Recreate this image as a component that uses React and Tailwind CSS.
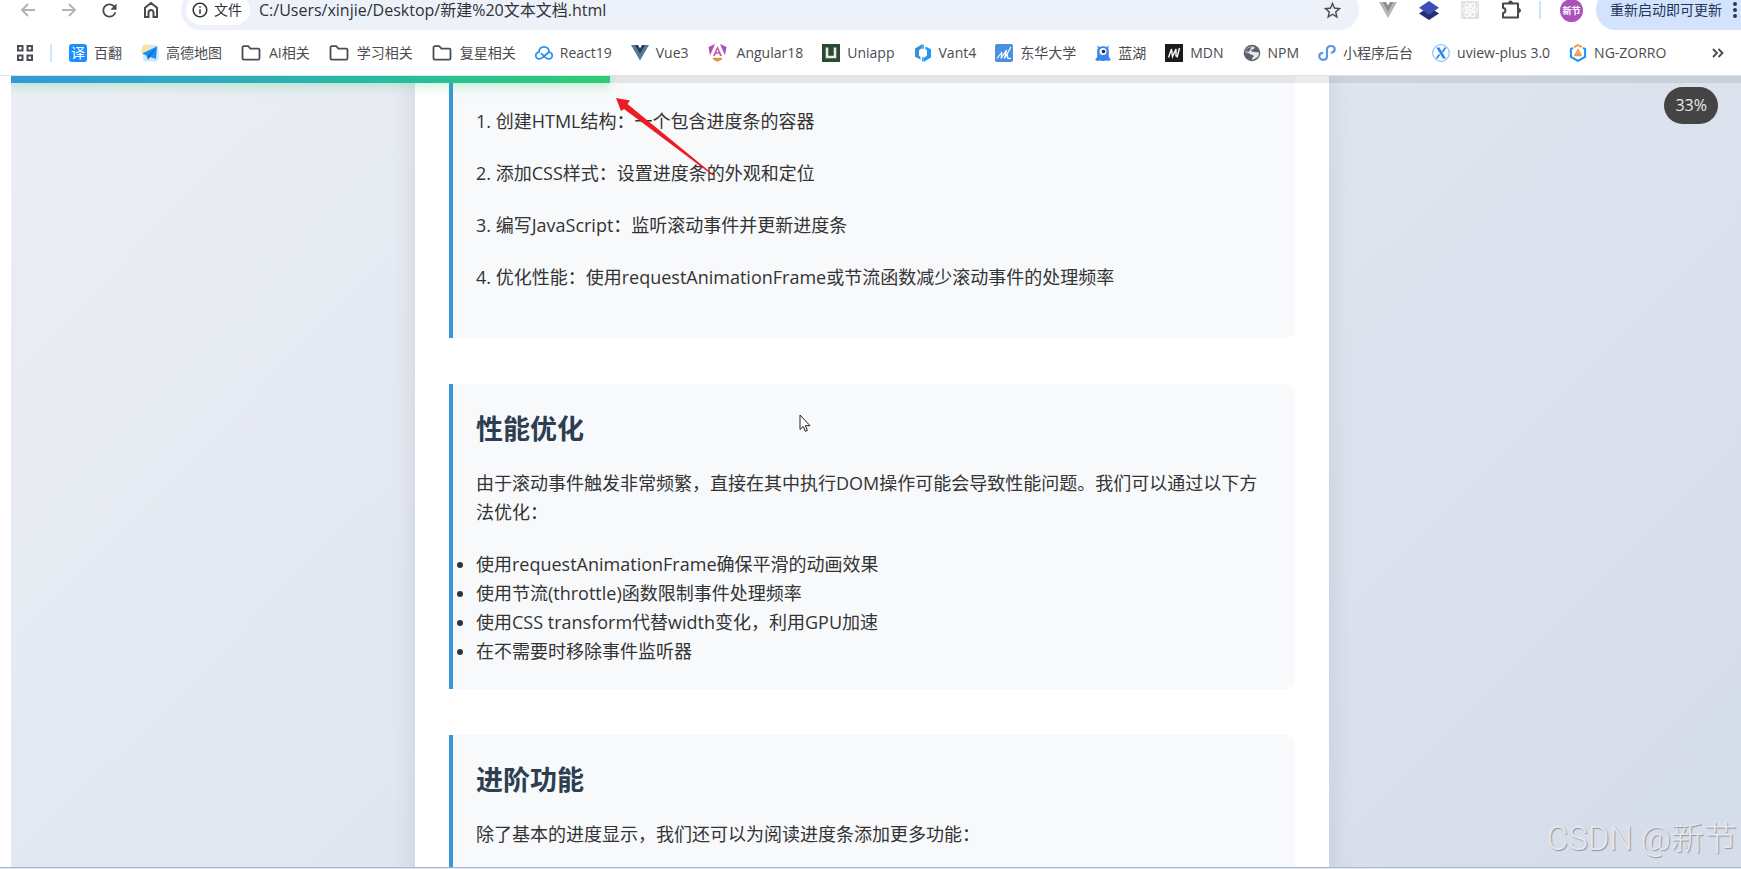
import React from 'react';
import { MdRefresh, MdInfoOutline, MdStarBorder } from 'react-icons/md';

const PROGRESS = 34.6;

const FolderIcon = () => (
    <svg viewBox="0 0 20 18" className="w-5 h-[18px] mr-[2px]" fill="none" stroke="#4a4d52" strokeWidth="1.8" strokeLinejoin="round">
        <path d="M1.5 3.5a1.3 1.3 0 0 1 1.3-1.3h4.4L9.4 4.6h7.8a1.3 1.3 0 0 1 1.3 1.3v8.4a1.3 1.3 0 0 1-1.3 1.3H2.8a1.3 1.3 0 0 1-1.3-1.3z" />
    </svg>
);

const TranslateIcon = () => (
    <span className="w-[18px] h-[18px] rounded-[3px] bg-[#1890ff] text-white text-[14px] leading-[18px] text-center">译</span>
);

const AmapIcon = () => (
    <svg viewBox="0 0 18 18" className="w-[18px] h-[18px]">
        <rect x="2" y="1" width="15.5" height="16.5" rx="4" fill="#cfe7fb" />
        <path d="M5 .5h5L6 8 .5 9V5A4.500 4.500 0 0 1 5 .5z" fill="#fbe3a4" />
        <path d="M16 2.500 1 9.500l4.500 2 1.500 4 2-2.500 6 2z" fill="#1a8cf5" />
        <path d="m16 2.500-9.500 9.500.5 3.500 2-2.500z" fill="#0e6fd6" />
    </svg>
);

const ReactCloudIcon = () => (
    <svg viewBox="0 0 18 18" className="w-[18px] h-[18px]" fill="none" stroke="#2490f0" strokeWidth="1.7" strokeLinecap="round" strokeLinejoin="round">
        <path d="M4 8C4 4.800 6.200 2.800 9 2.800S14 4.800 14 8c2 .3 3.200 1.600 3.200 3.400 0 2-1.500 3.500-3.600 3.500-1.400 0-2.200-.5-3.100-1.400L6.500 9.600" />
        <path d="M4 8C2 8.300.8 9.600.8 11.400c0 2 1.500 3.500 3.600 3.500 1.400 0 2.200-.5 3.100-1.400L14 8" />
    </svg>
);

const VueIcon = () => (
    <svg viewBox="0 0 18 18" className="w-[18px] h-[18px]">
        <path d="M0 1h3.600L9 10.300 14.400 1H18L9 16.600z" fill="#4a7ba0" />
        <path d="M3.600 1H7l2 3.500L11 1h3.400L9 10.300z" fill="#2b3a52" />
    </svg>
);

const AngularIcon = () => (
    <svg viewBox="0 0 19 19" className="w-[19px] h-[19px] mr-[3px]">
        <path d="M.5 4 7 1 2 12.500zM18.500 4 12 1l5 11.500z" fill="#b54bc0" />
        <path d="M9.500 3 5 13h2l.9-2.200h3.200L12 13h2zm0 3.600 1.100 2.700H8.400z" fill="#c65a9c" />
        <path d="M4.600 14.800h9.800l-.7 1.900-4.200 2-4.200-2z" fill="#e2944c" />
    </svg>
);

const UniappIcon = () => (
    <svg viewBox="0 0 18 18" className="w-[18px] h-[18px]">
        <rect width="18" height="18" fill="#2b4b30" />
        <path d="M5 3.500V13h8V3.500" fill="none" stroke="#e8efe8" strokeWidth="2.6" />
    </svg>
);

const VantIcon = () => (
    <svg viewBox="0 0 18 18" className="w-[18px] h-[18px]">
        <path d="M8.500 0v4L5 6.200v5.600l1.500 1v2.800L1 12.700V4.600z" fill="#3f8fd0" />
        <path d="M9.500 18v-4l3.500-2.200V6.200l-1.500-1V2.400L17 5.300v8.100z" fill="#1b9af5" />
        <path d="M8.500 0 10 1v3.500L8.500 5.500zM9.500 18 8 17v-3.500l1.500-1z" fill="#37a9f2" />
    </svg>
);

const DonghuaIcon = () => (
    <svg viewBox="0 0 18 18" className="w-[18px] h-[18px]">
        <rect width="18" height="18" rx="2" fill="#4a8fe2" />
        <path d="m2 14.500 5-6.500-1 6.500L11.500 6 9.500 14.500 16 3M12 10l1 4.500h3" fill="none" stroke="#fff" strokeWidth="1.2" />
    </svg>
);

const LanhuIcon = () => (
    <svg viewBox="0 0 16 18" className="w-4 h-[18px]">
        <path d="M3 1.500 4 3.200C5 2.600 6.400 2.300 8 2.300s3 .3 4 .9l1-1.700.8.4-.7 2.400c.5.8.7 1.700.7 2.700v5.500c.4 1.400 1.300 2.300 1.900 2.700-.2 1-1 1.600-2.200 1.600-1 0-1.600-.4-2.300-.4-.8 0-1.500.6-3.200.6s-2.400-.6-3.200-.6c-.7 0-1.300.4-2.300.4-1.200 0-2-.6-2.200-1.600.6-.4 1.500-1.300 1.900-2.700V7c0-1 .2-1.900.7-2.700l-.7-2.400z" fill="#3c86f0" />
        <circle cx="8" cy="7.500" r="3.500" fill="#fff" />
        <circle cx="8.500" cy="7.500" r="1.800" fill="#1f2b47" />
    </svg>
);

const MdnIcon = () => (
    <svg viewBox="0 0 18 18" className="w-[18px] h-[18px]">
        <rect width="18" height="18" fill="#1b1b1b" />
        <path d="M3.500 13.500 6.500 5l1 7.500L11 5v7.500M14.500 4 12 13.500" fill="none" stroke="#fff" strokeWidth="1.4" />
    </svg>
);

const NpmIcon = () => (
    <svg viewBox="0 0 18 18" className="w-[18px] h-[18px]">
        <circle cx="9" cy="9" r="8.300" fill="#5d6170" />
        <path d="M9.500 2.500c2 .3 2.500 1.300 1.500 2.200C10 5.500 8 5.300 8 6.500s2 1.200 3.500 1.500 2.500 0 4.500.5c0 2-.5 3.500-1.500 4.500-1 .8-2.500 1.500-4 2.500-1 .5-2 0-1.500-1 .5-1.200 2-1.500 1.800-2.500-.3-1-1.800-1-2.800-1.500S6 8.800 2.500 8.500c0-2 1-3.800 2.500-5 1.500-.9 3-1.200 4.500-1z" fill="#fff" opacity=".85" />
        <path d="M3.500 5.500C5 3.200 7 2.800 9 3.500 7 4.500 7.500 5.500 6.500 7 5.500 8.200 4 7.800 3 7.500z" fill="#5d6170" />
    </svg>
);

const MiniProgramIcon = () => (
    <svg viewBox="0 0 18 18" className="w-[18px] h-[18px]" fill="none" stroke="#5b95e8" strokeWidth="2.2" strokeLinecap="round">
        <path d="M4.300 8.900c-1.800.3-3 1.700-3 3.400 0 2 1.600 3.500 3.700 3.500 2.300 0 4-1.500 4-3.800V5.600c0-2.100 1.700-3.600 4-3.600 2.100 0 3.700 1.400 3.700 3.300 0 1.700-1.200 3-3 3.300" />
    </svg>
);

const UviewIcon = () => (
    <svg viewBox="0 0 18 18" className="w-[18px] h-[18px]" fill="none">
        <circle cx="9" cy="9" r="8.300" stroke="#8ac4f8" strokeWidth="1.2" />
        <path d="M4.300 3.500h3.200l6.500 11h-3.200z" fill="#2f86f0" />
        <path d="M13.500 3.500 10.500 8M7.500 10.500l-3 4" stroke="#2f86f0" strokeWidth="1.8" />
    </svg>
);

const ZorroIcon = () => (
    <svg viewBox="0 0 18 18" className="w-[18px] h-[18px]" fill="none" strokeWidth="2">
        <path d="M5 3.200 9 1.200l4 2" stroke="#ef9a4b" />
        <path d="M4 3.800 1.900 5v8L9 16.900l7.100-3.900V5L14 3.800" stroke="#1890ff" />
        <path d="M9 5.800 6 11.500h6z" stroke="#ef9a4b" strokeWidth="1.6" />
        <circle cx="9" cy="10" r="1" fill="#e36b3c" />
    </svg>
);

const BOOKMARKS = [
    { label: '百翻', Icon: TranslateIcon },
    { label: '高德地图', Icon: AmapIcon },
    { label: 'AI相关', Icon: FolderIcon, folder: true },
    { label: '学习相关', Icon: FolderIcon, folder: true },
    { label: '复星相关', Icon: FolderIcon, folder: true },
    { label: 'React19', Icon: ReactCloudIcon },
    { label: 'Vue3', Icon: VueIcon },
    { label: 'Angular18', Icon: AngularIcon },
    { label: 'Uniapp', Icon: UniappIcon },
    { label: 'Vant4', Icon: VantIcon },
    { label: '东华大学', Icon: DonghuaIcon },
    { label: '蓝湖', Icon: LanhuIcon },
    { label: 'MDN', Icon: MdnIcon },
    { label: 'NPM', Icon: NpmIcon },
    { label: '小程序后台', Icon: MiniProgramIcon },
    { label: 'uview-plus 3.0', Icon: UviewIcon },
    { label: 'NG-ZORRO', Icon: ZorroIcon }
];

const STEPS = [
    '1. 创建HTML结构：一个包含进度条的容器',
    '2. 添加CSS样式：设置进度条的外观和定位',
    '3. 编写JavaScript：监听滚动事件并更新进度条',
    '4. 优化性能：使用requestAnimationFrame或节流函数减少滚动事件的处理频率'
];

const TIPS = [
    '使用requestAnimationFrame确保平滑的动画效果',
    '使用节流(throttle)函数限制事件处理频率',
    '使用CSS transform代替width变化，利用GPU加速',
    '在不需要时移除事件监听器'
];

const NavButton = ({ label, children }) => (
    <button type="button" aria-label={label} className="w-[41px] h-10 shrink-0 flex items-center justify-center">
        {children}
    </button>
);

const Toolbar = () => (
    <div className="flex items-center h-10 -mt-[10px] pl-[7px]">
        <NavButton label="后退">
            <svg viewBox="0 0 16 16" className="w-4 h-4" fill="none" stroke="#b3b3b3" strokeWidth="1.8"><path d="M15 8H2M8 2 2 8l6 6" /></svg>
        </NavButton>
        <NavButton label="前进">
            <svg viewBox="0 0 16 16" className="w-4 h-4" fill="none" stroke="#b3b3b3" strokeWidth="1.8"><path d="M1 8h13M8 2l6 6-6 6" /></svg>
        </NavButton>
        <NavButton label="重新加载"><MdRefresh size={21} color="#46484c" /></NavButton>
        <NavButton label="主页">
            <svg viewBox="0 0 16 18" className="w-4 h-[18px]" fill="none" stroke="#46484c" strokeWidth="2">
                <path d="M2 6.800 8 2l6 4.800V16h-3.500v-4.500a2.500 2.500 0 0 0-5 0V16H2z" />
            </svg>
        </NavButton>

        <div className="flex-1 min-w-0 ml-[10px] h-10 rounded-full bg-[#edf1fa] flex items-center pl-[5px] pr-4">
            <button type="button" className="h-[30px] pl-[5px] pr-2 rounded-full bg-white flex items-center gap-[5px] text-sm text-[#303236] shrink-0">
                <MdInfoOutline size={18} color="#303236" />
                文件
            </button>
            <input
                aria-label="地址"
                defaultValue="C:/Users/xinjie/Desktop/新建%20文本文档.html"
                className="flex-1 min-w-0 ml-[9px] bg-transparent text-base text-[#303236] outline-none"
            />
            <button type="button" aria-label="添加书签"><MdStarBorder size={21} color="#46484c" /></button>
        </div>

        <div className="flex items-center shrink-0 ml-2">
            <NavButton label="Vue Devtools">
                <svg viewBox="0 0 18 16" className="w-[18px] h-4">
                    <path d="M0 0h5l4 7 4-7h5L9 16z" fill="#b5b5b5" />
                    <path d="M3.600 0H7l2 3.500L11 0h3.400L9 9.500z" fill="#8c8c8c" />
                </svg>
            </NavButton>
            <NavButton label="扩展">
                <svg viewBox="0 0 20 20" className="w-5 h-5">
                    <path d="m10 7 10 6.500L10 20 0 13.500z" fill="#262e78" />
                    <path d="m10 1 10 6.700-10 6.700L0 7.700z" fill="#3a50b8" />
                </svg>
            </NavButton>
            <NavButton label="React Devtools">
                <svg viewBox="0 0 18 18" className="w-[18px] h-[18px]">
                    <rect width="18" height="18" rx="1" fill="#e3e3e3" />
                    <g fill="none" stroke="#fff" strokeWidth="1">
                        <ellipse cx="9" cy="9" rx="7.500" ry="3" />
                        <ellipse cx="9" cy="9" rx="7.500" ry="3" transform="rotate(60 9 9)" />
                        <ellipse cx="9" cy="9" rx="7.500" ry="3" transform="rotate(120 9 9)" />
                    </g>
                    <circle cx="9" cy="9" r="1.500" fill="#fff" />
                </svg>
            </NavButton>
            <NavButton label="扩展程序">
                <svg viewBox="0 0 20 20" className="w-5 h-5" fill="none" stroke="#46484c" strokeWidth="2" strokeLinejoin="round">
                    <path d="M2 3.500h15v14H2v-4.600a2.400 2.400 0 0 0 0-4.800z" />
                    <path d="M7.500 3a2 2 0 0 1 4 0zM17.500 8.500a2 2 0 0 1 0 4z" fill="#46484c" strokeWidth="1" />
                </svg>
            </NavButton>
            <span className="w-[2px] h-[18px] bg-[#d3e3fd] ml-2" />
            <button type="button" className="w-[23px] h-[23px] ml-[19px] rounded-full bg-[#ab52b8] text-white text-[9px] font-bold leading-[23px] text-center">新节</button>
            <button type="button" className="h-10 ml-[13px] pl-[14px] rounded-l-full bg-[#d3e3fd] text-sm text-[#24355c] flex items-center gap-[7px]">
                重新启动即可更新
                <svg viewBox="0 0 12 18" className="w-3 h-[18px]" fill="#24355c">
                    <circle cx="6" cy="3" r="2" /><circle cx="6" cy="9" r="2" /><circle cx="6" cy="15" r="2" />
                </svg>
            </button>
        </div>
    </div>
);

const BookmarksBar = () => (
    <nav className="flex items-center h-[45px] px-[17px] text-sm text-[#4a4c50] whitespace-nowrap">
        <button type="button" aria-label="应用" className="shrink-0">
            <svg viewBox="0 0 16 16" className="w-4 h-4" fill="none" stroke="#4a4d52" strokeWidth="2">
                <path d="M1 1h4.500v4.500H1zM10.500 1H15v4.500h-4.500zM1 10.500h4.500V15H1zM10.500 10.500H15V15h-4.500z" />
            </svg>
        </button>
        <span className="w-[2px] h-[18px] bg-[#d3e3fd] mx-[17px]" />
        <div className="flex items-center gap-[19px]">
            {BOOKMARKS.map(({ label, Icon, folder }) => folder ? (
                <button key={label} type="button" className="flex items-center gap-[6px]">
                    <Icon />
                    {label}
                </button>
            ) : (
                <a key={label} href="#" className="flex items-center gap-[7px]">
                    <Icon />
                    {label}
                </a>
            ))}
        </div>
        <button type="button" aria-label="更多书签" className="ml-auto shrink-0">
            <svg viewBox="0 0 12 10" className="w-3 h-[10px]" fill="none" stroke="#46484c" strokeWidth="1.8">
                <path d="m1 1 4 4-4 4M6.500 1l4 4-4 4" />
            </svg>
        </button>
    </nav>
);

const Section = ({ title, children }) => (
    <section className="border-l-4 border-[#3498db] rounded-r-[9px] bg-[#f8f9fb] p-[23px]">
        <h2 className="text-[27px] leading-[43px] font-bold text-[#2c3e50] mb-[19px]">{title}</h2>
        {children}
    </section>
);

const Article = () => (
    <article className="w-full max-w-[914px] mx-auto px-[34px] bg-white shadow-[0_0_23px_rgba(60,80,110,0.15)] flex flex-col gap-[46px] text-lg leading-[29px] text-[#333]">
        <section className="border-l-4 border-[#3498db] rounded-br-[9px] bg-[#f8f9fb] px-[23px] pt-[31px] pb-[23px]">
            {STEPS.map(step => <p key={step} className="mb-[23px]">{step}</p>)}
        </section>

        <Section title="性能优化">
            <p className="mb-[23px]">由于滚动事件触发非常频繁，直接在其中执行DOM操作可能会导致性能问题。我们可以通过以下方法优化：</p>
            <ul className="list-disc">
                {TIPS.map(tip => <li key={tip}>{tip}</li>)}
            </ul>
        </Section>

        <Section title="进阶功能">
            <p className="mb-[23px]">除了基本的进度显示，我们还可以为阅读进度条添加更多功能：</p>
        </Section>
    </article>
);

const Annotation = () => (
    <>
        <svg viewBox="0 0 100 82" className="absolute left-[605px] top-[21px] w-[100px] h-[82px] z-20" fill="#ed1c24">
            <path d="M0 1 14 3.500 11.500 7 98 78 97.500 79 8 12 5 14z" />
        </svg>
        <svg viewBox="0 0 12 18" className="absolute left-[788px] top-[338px] w-3 h-[18px] z-20" fill="#fff" stroke="#222" strokeWidth="1">
            <path d="M1 1v14.500l3.200-3 2.200 4.800 2-.9-2.100-4.700H11z" />
        </svg>
    </>
);

export default function App() {
    return (
        <div lang="zh-CN" className="h-screen flex flex-col overflow-hidden bg-white font-['Open_Sans','Noto_Sans_CJK_SC',sans-serif]">
            <header className="shrink-0 border-b border-[#e0e3e8] overflow-hidden">
                <Toolbar />
                <BookmarksBar />
            </header>

            <main className="relative flex-1 min-h-0 overflow-hidden ml-[11px] pr-2 bg-linear-135 from-[#ebeef4] to-[#d5dcea]">
                <div className="absolute inset-x-0 top-0 h-[7px] bg-black/8 z-10">
                    <div
                        className="h-full bg-linear-to-r from-[#3498db] to-[#2ecc71] shadow-[0_2px_11px_rgba(46,204,113,0.4)]"
                        style={{ width: `${PROGRESS}%` }}
                    />
                </div>
                <div className="absolute right-[23px] top-[11px] h-[37px] px-[11px] rounded-full bg-[#444] text-white/90 text-base leading-[37px] z-10">33%</div>
                <Article />
                <Annotation />
                <div className="absolute right-1 bottom-2 text-[33px] leading-10 font-light text-[#e6e8ec] [text-shadow:1px_1px_1px_#8f949c] font-['Roboto','Noto_Sans_CJK_SC',sans-serif] whitespace-nowrap z-10">CSDN @新节</div>
            </main>
            <footer className="h-[2px] shrink-0 border-t border-[#aab4ca] bg-[#dfe7f5]" />
        </div>
    );
}
